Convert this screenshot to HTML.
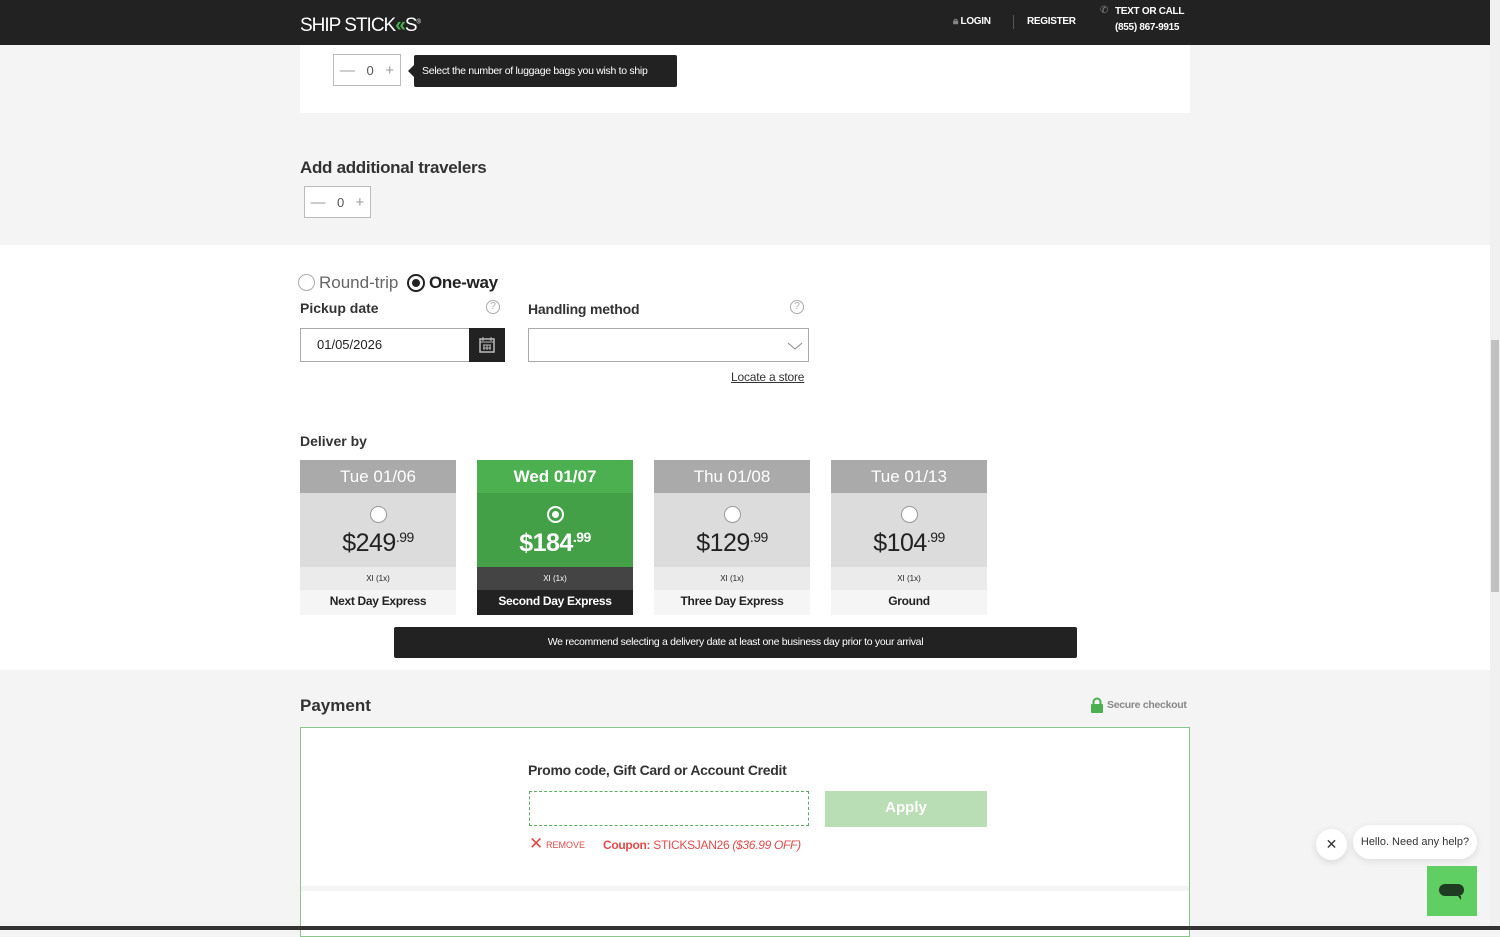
<!DOCTYPE html>
<html><head><style>
*{box-sizing:border-box;margin:0;padding:0}
body{width:1500px;height:930px;overflow:hidden;font-family:"Liberation Sans",Arial,sans-serif;color:#222;background:#f4f4f4;position:relative}
.a{position:absolute}
.hdr{left:0;top:0;width:1490px;height:45px;background:#222}
.stp{border:1px solid #bbb;background:#fff;height:32px;display:flex;align-items:center;justify-content:space-around;color:#999;font-size:15px}
.stp b{font-weight:normal;color:#555;font-size:13px}
.card{width:156px;height:155px;top:460px;overflow:hidden}
.card .d{height:33px;background:#aaa;color:#fff;font-size:17px;text-align:center;line-height:33px}
.card .p{height:74px;background:#dcdcdc;text-align:center;padding-top:13px}
.card .p i{display:block;width:17px;height:17px;border-radius:50%;background:#fff;border:1px solid #999;margin:0 auto;position:relative}
.card .p span{font-size:25px;color:#222;display:block;line-height:28px;letter-spacing:-0.5px}
.card .p sup{font-size:14px;vertical-align:9px}
.card .x{height:23px;background:#ebebeb;font-size:8px;text-align:center;line-height:23px}
.card .n{height:25px;background:#f5f5f5;font-size:12px;font-weight:bold;text-align:center;line-height:23px;letter-spacing:-0.3px}
.sel .d{background:#4caf50;font-weight:bold}
.sel .p{background:#43a047}
.sel .p span{color:#fff;font-weight:bold}
.sel .p i{background:#43a047;border:2px solid #fff}
.sel .p i:after{content:"";position:absolute;left:3px;top:3px;width:7px;height:7px;border-radius:50%;background:#fff}
.sel .x{background:#444;color:#fff}
.sel .n{background:#222;color:#fff}
.q{width:14px;height:14px;border:1px solid #aaa;border-radius:50%;font-size:10px;color:#aaa;text-align:center;line-height:12px}
</style></head><body>
<div class="a hdr"></div>
<div class="a" style="left:300px;top:15px;color:#fff;font-size:19px;letter-spacing:-1px">SHIP STICK<span style="color:#4caf50;font-weight:bold">«</span>S<sup style="font-size:6px">®</sup></div>
<div class="a" style="left:953px;top:16px;color:#fff;font-size:10px;font-weight:bold;letter-spacing:-0.3px"><span style="color:#888">🔒︎</span> LOGIN</div>
<div class="a" style="left:1013px;top:15px;width:1px;height:14px;background:#555"></div>
<div class="a" style="left:1027px;top:16px;color:#fff;font-size:10px;font-weight:bold;letter-spacing:-0.3px">REGISTER</div>
<div class="a" style="left:1100px;top:5px;color:#888;font-size:10px">✆</div>
<div class="a" style="left:1115px;top:4px;color:#fff;font-size:10px;font-weight:bold;line-height:16px;letter-spacing:-0.3px">TEXT OR CALL<br>(855) 867-9915</div>
<div class="a" style="left:1490px;top:0;width:10px;height:930px;background:#f0f0f0"></div>
<div class="a" style="left:1491px;top:340px;width:8px;height:252px;background:#c1c1c1"></div>

<div class="a" style="left:300px;top:45px;width:890px;height:68px;background:#fff"></div>
<div class="a stp" style="left:333px;top:54px;width:68px"><span>—</span><b>0</b><span>+</span></div>
<div class="a" style="left:414px;top:55px;width:263px;height:32px;background:#222;color:#fff;font-size:10.5px;line-height:32px;padding-left:8px;border-radius:2px;letter-spacing:-0.3px">Select the number of luggage bags you wish to ship</div>
<div class="a" style="left:408px;top:65px;border:6px solid transparent;border-right-color:#222;border-left:0"></div>

<div class="a" style="left:300px;top:158px;font-size:17px;font-weight:bold;color:#333;letter-spacing:-0.3px">Add additional travelers</div>
<div class="a stp" style="left:304px;top:186px;width:67px"><span>—</span><b>0</b><span>+</span></div>

<div class="a" style="left:0;top:245px;width:1490px;height:425px;background:#fff"></div>
<div class="a" style="left:298px;top:274px;width:17px;height:17px;border:1px solid #aaa;border-radius:50%"></div>
<div class="a" style="left:319px;top:273px;font-size:17px;color:#666">Round-trip</div>
<div class="a" style="left:407px;top:274px;width:18px;height:18px;border:2px solid #222;border-radius:50%"><div style="margin:3px;width:8px;height:8px;border-radius:50%;background:#222"></div></div>
<div class="a" style="left:429px;top:273px;font-size:17px;font-weight:bold;letter-spacing:-0.3px">One-way</div>
<div class="a" style="left:300px;top:300px;font-size:14px;font-weight:bold;color:#333">Pickup date</div>
<div class="a q" style="left:486px;top:300px">?</div>
<div class="a" style="left:528px;top:301px;font-size:14px;font-weight:bold;color:#333;letter-spacing:-0.2px">Handling method</div>
<div class="a q" style="left:790px;top:300px">?</div>
<div class="a" style="left:300px;top:328px;width:170px;height:34px;border:1px solid #aaa;font-size:13px;line-height:32px;padding-left:16px">01/05/2026</div>
<div class="a" style="left:469px;top:328px;width:36px;height:34px;background:#222"><svg width="36" height="34"><rect x="11" y="11" width="14" height="13" fill="none" stroke="#bbb" stroke-width="1.5"/><path d="M11 14h14M14 17h8M14 20h8M15 17v5M18 17v5M21 17v5M14 9v4M22 9v4" stroke="#bbb"/></svg></div>
<div class="a" style="left:528px;top:328px;width:281px;height:34px;border:1px solid #aaa"><svg class="a" style="left:258px;top:12px" width="16" height="10"><path d="M1 2l7 6 7-6" fill="none" stroke="#888"/></svg></div>
<div class="a" style="left:731px;top:370px;font-size:12px;color:#333;text-decoration:underline;letter-spacing:-0.2px">Locate a store</div>

<div class="a" style="left:300px;top:433px;font-size:14px;font-weight:bold;color:#333">Deliver by</div>
<div class="a card" style="left:300px"><div class="d">Tue 01/06</div><div class="p"><i></i><span>$249<sup>.99</sup></span></div><div class="x">XI (1x)</div><div class="n">Next Day Express</div></div>
<div class="a card sel" style="left:477px"><div class="d">Wed 01/07</div><div class="p"><i></i><span>$184<sup>.99</sup></span></div><div class="x">XI (1x)</div><div class="n">Second Day Express</div></div>
<div class="a card" style="left:654px"><div class="d">Thu 01/08</div><div class="p"><i></i><span>$129<sup>.99</sup></span></div><div class="x">XI (1x)</div><div class="n">Three Day Express</div></div>
<div class="a card" style="left:831px"><div class="d">Tue 01/13</div><div class="p"><i></i><span>$104<sup>.99</sup></span></div><div class="x">XI (1x)</div><div class="n">Ground</div></div>
<div class="a" style="left:394px;top:627px;width:683px;height:31px;background:#222;color:#fff;font-size:10.5px;text-align:center;line-height:31px;border-radius:2px;letter-spacing:-0.3px">We recommend selecting a delivery date at least one business day prior to your arrival</div>

<div class="a" style="left:300px;top:696px;font-size:17px;font-weight:bold;color:#333">Payment</div>
<div class="a" style="left:1090px;top:697px;width:14px;height:16px"><svg width="14" height="16"><path d="M3.5 7V5a3.5 3.5 0 017 0v2" fill="none" stroke="#4caf50" stroke-width="2"/><rect x="1" y="7" width="12" height="9" rx="1" fill="#4caf50"/></svg></div>
<div class="a" style="left:1107px;top:699px;font-size:10.5px;font-weight:bold;color:#888;letter-spacing:-0.3px">Secure checkout</div>
<div class="a" style="left:300px;top:727px;width:890px;height:210px;background:#fff;border:1px solid #8bc48d"></div>
<div class="a" style="left:301px;top:886px;width:888px;height:5px;background:#f4f4f4"></div>
<div class="a" style="left:528px;top:762px;font-size:14px;font-weight:bold;color:#333;letter-spacing:-0.3px">Promo code, Gift Card or Account Credit</div>
<div class="a" style="left:529px;top:791px;width:280px;height:35px;border:1px dashed #5cae5f"></div>
<div class="a" style="left:825px;top:791px;width:162px;height:36px;background:#b9ddb4;color:#fff;font-size:15px;font-weight:bold;text-align:center;line-height:34px">Apply</div>
<div class="a" style="left:529px;top:836px;color:#e04b4b;font-size:17px;line-height:16px">✕</div>
<div class="a" style="left:546px;top:840px;color:#e04b4b;font-size:9px">REMOVE</div>
<div class="a" style="left:603px;top:838px;color:#e04b4b;font-size:12px;letter-spacing:-0.3px"><b>Coupon:</b> STICKSJAN26 <i>($36.99 OFF)</i></div>

<div class="a" style="left:1316px;top:829px;width:31px;height:31px;border-radius:50%;background:#fff;box-shadow:0 2px 8px rgba(0,0,0,.12);text-align:center;line-height:31px;font-size:14px;color:#333">✕</div>
<div class="a" style="left:1353px;top:825px;width:124px;height:34px;border-radius:17px;background:#fff;box-shadow:0 2px 8px rgba(0,0,0,.1);font-size:11px;color:#333;line-height:34px;text-align:center">Hello. Need any help?</div>
<div class="a" style="left:1427px;top:866px;width:50px;height:50px;background:#5fce63"><svg width="50" height="50"><rect x="12" y="18" width="25" height="12" rx="6" fill="#1f3b21"/><path d="M31 30l3 4v-4z" fill="#1f3b21"/></svg></div>
<div class="a" style="left:0;top:926px;width:1500px;height:4px;background:#333"></div>
</body></html>
